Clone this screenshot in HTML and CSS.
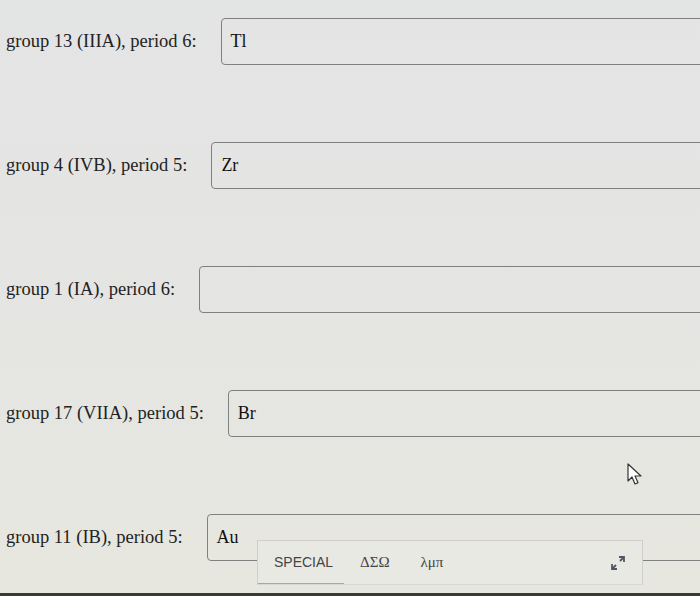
FILE: index.html
```html
<!DOCTYPE html>
<html lang="en">
<head>
    <meta charset="UTF-8">
    <title>Element positions</title>
    <link rel="stylesheet" href="styles.css">
</head>
<body>
    <section class="answers">
        <div class="row">
            <span class="label">group 13 (IIIA), period 6:</span>
            <div class="answer-box">Tl</div>
        </div>
        <div class="row">
            <span class="label">group 4 (IVB), period 5:</span>
            <div class="answer-box">Zr</div>
        </div>
        <div class="row">
            <span class="label">group 1 (IA), period 6:</span>
            <div class="answer-box"></div>
        </div>
        <div class="row">
            <span class="label">group 17 (VIIA), period 5:</span>
            <div class="answer-box">Br</div>
        </div>
        <div class="row">
            <span class="label">group 11 (IB), period 5:</span>
            <div class="answer-box">Au</div>
        </div>
    </section>

    <!-- symbol palette that pops up under the active box -->
    <div class="palette">
        <span class="tab active">SPECIAL</span>
        <span class="tab greek">ΔΣΩ</span>
        <span class="tab greek">λμπ</span>
        <svg class="expand" width="16" height="16" viewBox="0 0 16 16">
            <path d="M9 2h5v5M14 2l-4 4M7 14H2V9M2 14l4-4" fill="none" stroke="#4f5766" stroke-width="1.8"/>
        </svg>
    </div>

    <svg class="cursor" width="16" height="24" viewBox="0 0 16 24">
        <path d="M1 1v17l4-4 3 7 3-1.3-3-6.7h6z" fill="#fff" stroke="#333" stroke-width="1.2" stroke-linejoin="round"/>
    </svg>

    <div class="bezel"></div>
</body>
</html>
```

FILE: styles.css
```css
html, body {
    height: 100%;
}
body {
    font-family: "Liberation Serif", "Times New Roman", serif;
    margin: 0;
    padding: 0;
    overflow: hidden;
    background: linear-gradient(to bottom, #e3e4e4 0%, #e5e6e2 60%, #e7e7df 100%);
    color: #222;
    position: relative;
}
.answers {
    display: flex;
    flex-direction: column;
    gap: 77px;
    padding: 18px 0 0 6px;
}
.row {
    display: flex;
    align-items: center;
    gap: 24px;
    height: 47px;
}
.label {
    font-size: 18.5px;
    white-space: nowrap;
}
.answer-box {
    flex: 1;
    height: 45px;
    margin-right: -12px;
    border: 1px solid #80807e;
    border-radius: 4px;
    display: flex;
    align-items: center;
    padding-left: 9px;
    font-size: 18px;
    color: #111;
}
.palette {
    position: absolute;
    left: 257px;
    top: 540px;
    width: 386px;
    height: 45px;
    background-color: #e9e9e4;
    border: 1px solid #cfcfca;
    border-bottom-color: #d8d8d2;
    display: flex;
    align-items: center;
    box-sizing: border-box;
}
.tab {
    color: #444;
    padding: 0 16px;
    height: 100%;
    display: flex;
    align-items: center;
}
.tab.active {
    font-family: "Liberation Sans", Arial, sans-serif;
    font-size: 14px;
    padding: 0 16px;
    width: 86px;
    box-sizing: border-box;
    border-bottom: 1px solid #d9928f;
}
.tab.greek {
    font-size: 15px;
    padding: 0 15px 0 16px;
}
.expand {
    margin-left: auto;
    margin-right: 16px;
}
.cursor {
    position: absolute;
    left: 627px;
    top: 463px;
}
.bezel {
    position: absolute;
    left: 0;
    right: 0;
    bottom: 0;
    height: 3px;
    background-color: #3a3a3a;
}
```
